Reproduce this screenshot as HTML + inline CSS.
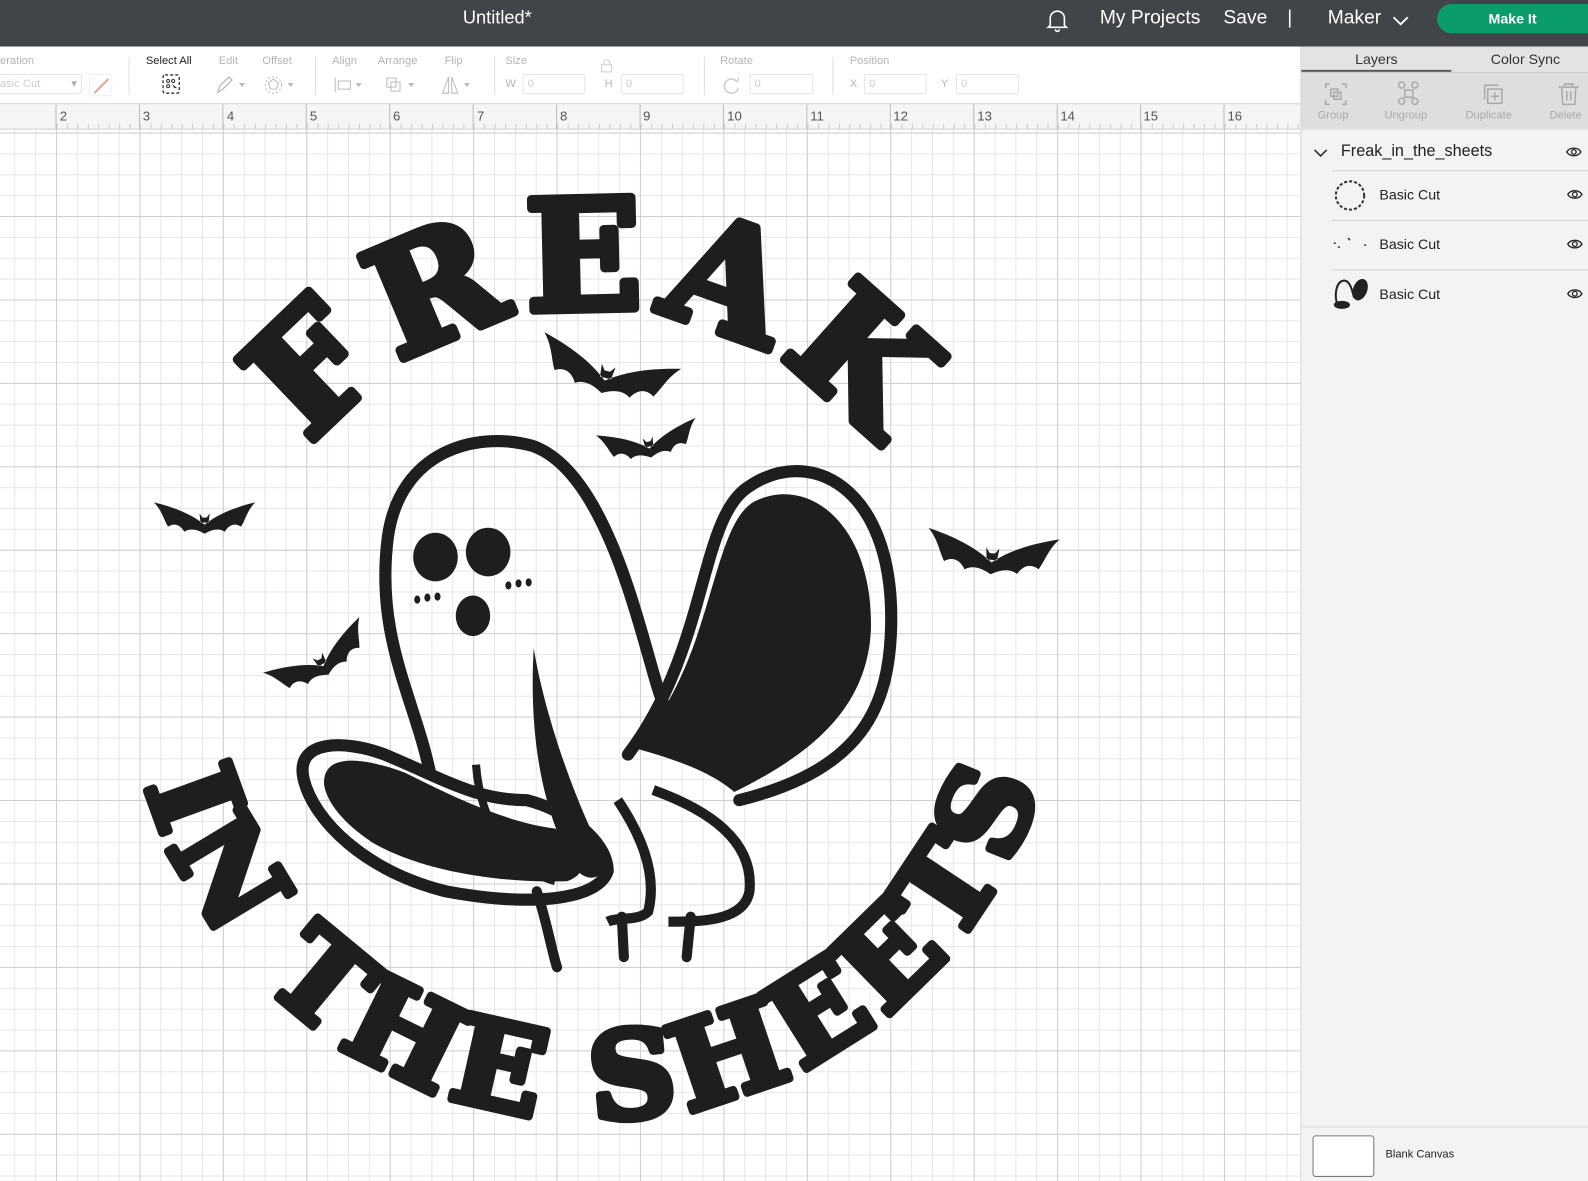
<!DOCTYPE html>
<html><head><meta charset="utf-8">
<style>
*{margin:0;padding:0;box-sizing:border-box}
body{width:1588px;height:1181px;overflow:hidden;font-family:"Liberation Sans",sans-serif;background:#fff;position:relative}
#w{position:absolute;left:0;top:0;width:1568px;height:1166px;transform:scale(1.01276,1.01286);transform-origin:0 0;overflow:hidden}
.top{position:absolute;left:0;top:0;width:1568px;height:46px;background:#414449;color:#fff}
.top span{position:absolute;top:7px;font-size:19px}
.make{position:absolute;left:1419px;top:4px;width:149px;height:29px;border-radius:15px 0 0 15px;background:#0b9c6c;color:#fff;font-size:14px;text-align:center;line-height:29px;font-weight:bold}
.tb{position:absolute;left:0;top:46px;width:1284px;height:57px;background:#fff;border-bottom:1px solid #ccc}
.tb .l{position:absolute;top:8px;font-size:11px;color:#b5b5b5}
.tb .sep{position:absolute;top:10px;width:1px;height:38px;background:#ddd}
.inp{position:absolute;top:27px;height:20px;border:1px solid #e5e5e5;border-radius:2px;font-size:11px;color:#ccc;padding-left:4px;line-height:18px}
.ruler{position:absolute;left:0;top:103px;width:1284px;height:25px;background:#f5f5f5;border-bottom:1px solid #ccc}
.canvas{position:absolute;left:0;top:128px;width:1284px;height:1038px;
background-color:#fff;
background-image:linear-gradient(#cfcfcf 1px,transparent 1px),linear-gradient(90deg,#cfcfcf 1px,transparent 1px),linear-gradient(#e6e6e6 1px,transparent 1px),linear-gradient(90deg,#e6e6e6 1px,transparent 1px);
background-size:82.38px 82.38px,82.38px 82.38px,20.595px 20.595px,20.595px 20.595px;
background-position:0 2.9px,55.3px 0,0 2.9px,55.3px 0}
.panel{position:absolute;left:1284px;top:46px;width:284px;height:1120px;background:#f3f3f3;border-left:1px solid #d5d5d5}
.tabs{height:25px;background:#e3e3e3;position:relative}
.tabs span{position:absolute;top:4px;font-size:14px;color:#333}
.acts{height:57px;background:#dedede;position:relative;border-top:1px solid #ccc}
.acts span{position:absolute;top:36px;font-size:11px;color:#aaa}
.row{position:absolute;left:30px;width:254px;height:49px;border-top:1px solid #d0d0d0}
.row .t{position:absolute;left:47px;top:15px;font-size:14px;color:#222}
.eye{position:absolute;right:6px}
</style></head><body><div id="w">
<div class="top">
<span style="left:457px;font-size:18px">Untitled*</span>
<svg style="position:absolute;left:1033px;top:8px" width="22" height="24" viewBox="0 0 22 24"><path d="M4 17 V10 a7 7 0 0 1 14 0 V17 l2 2 H2 z M9 21 a2 2 0 0 0 4 0" fill="none" stroke="#fff" stroke-width="1.6"/></svg>
<span style="left:1086px">My Projects</span>
<span style="left:1208px">Save</span>
<span style="left:1271px">|</span>
<span style="left:1311px">Maker</span>
<svg style="position:absolute;left:1374px;top:14px" width="18" height="12"><path d="M2 3 L9 10 L16 3" fill="none" stroke="#fff" stroke-width="1.8"/></svg>
<div class="make">Make It</div>
</div>
<div class="tb">
<span class="l" style="left:0">eration</span>
<div class="inp" style="left:-5px;width:86px">asic Cut <span style="float:right;margin-right:4px;color:#aaa">▾</span></div>
<div style="position:absolute;left:88px;top:27px;width:22px;height:22px;border:1px solid #eee"><svg width="22" height="22"><path d="M4 18 L18 4" stroke="#f0a090" stroke-width="2"/></svg></div>
<div class="sep" style="left:127px"></div>
<span class="l" style="left:144px;color:#222">Select All</span>
<svg style="position:absolute;left:159px;top:26px" width="20" height="22"><rect x="2" y="2" width="16" height="18" rx="2" fill="none" stroke="#333" stroke-dasharray="3 2" stroke-width="1.3"/><circle cx="7" cy="8" r="1.5" fill="none" stroke="#333"/><circle cx="12" cy="8" r="1.5" fill="none" stroke="#333"/><circle cx="7" cy="13" r="1.5" fill="none" stroke="#333"/><path d="M11 11 l5 4 -3 0 z" fill="#333"/></svg>
<span class="l" style="left:216px">Edit</span>
<svg style="position:absolute;left:213px;top:28px" width="32" height="20"><path d="M2 17 L4 11 L13 2 L16 5 L7 14 Z" fill="none" stroke="#bbb" stroke-width="1.3"/><path d="M23 8 l3 4 3 -4z" fill="#bbb"/></svg>
<span class="l" style="left:259px">Offset</span>
<svg style="position:absolute;left:260px;top:28px" width="32" height="20"><circle cx="10" cy="10" r="8" fill="none" stroke="#bbb" stroke-dasharray="2 2"/><path d="M10 4 L15 8 L13 14 L7 14 L5 8Z" fill="none" stroke="#bbb"/><path d="M24 8 l3 4 3 -4z" fill="#bbb"/></svg>
<div class="sep" style="left:311px"></div>
<span class="l" style="left:328px">Align</span>
<svg style="position:absolute;left:329px;top:30px" width="32" height="16"><path d="M2 1 V15" stroke="#bbb"/><rect x="5" y="4" width="12" height="8" fill="none" stroke="#bbb"/><path d="M22 6 l3 4 3 -4z" fill="#bbb"/></svg>
<span class="l" style="left:373px">Arrange</span>
<svg style="position:absolute;left:381px;top:29px" width="32" height="18"><rect x="1" y="2" width="9" height="9" fill="none" stroke="#bbb"/><rect x="5" y="6" width="9" height="9" fill="none" stroke="#bbb"/><path d="M22 7 l3 4 3 -4z" fill="#bbb"/></svg>
<span class="l" style="left:439px">Flip</span>
<svg style="position:absolute;left:435px;top:28px" width="32" height="20"><path d="M8 2 L2 18 H8Z M11 2 V18 H17Z" fill="none" stroke="#bbb"/><path d="M23 8 l3 4 3 -4z" fill="#bbb"/></svg>
<div class="sep" style="left:488px"></div>
<span class="l" style="left:499px">Size</span>
<span class="l" style="left:499px;top:31px">W</span><div class="inp" style="left:516px;width:62px">0</div>
<span class="l" style="left:597px;top:31px">H</span><div class="inp" style="left:613px;width:62px">0</div>
<svg style="position:absolute;left:593px;top:12px" width="12" height="14"><rect x="1" y="6" width="10" height="7" fill="none" stroke="#ccc"/><path d="M3 6 V4 a3 3 0 0 1 6 0 V6" fill="none" stroke="#ccc"/></svg>
<div class="sep" style="left:695px"></div>
<span class="l" style="left:711px">Rotate</span>
<svg style="position:absolute;left:712px;top:29px" width="20" height="20"><path d="M16 6 A7 7 0 1 0 17 12" fill="none" stroke="#ccc" stroke-width="1.5"/><path d="M13 5 h4 v-4" fill="none" stroke="#ccc"/></svg>
<div class="inp" style="left:740px;width:63px">0</div>
<div class="sep" style="left:822px"></div>
<span class="l" style="left:839px">Position</span>
<span class="l" style="left:839px;top:31px">X</span><div class="inp" style="left:853px;width:62px">0</div>
<span class="l" style="left:929px;top:31px">Y</span><div class="inp" style="left:944px;width:62px">0</div>
</div>
<div class="ruler">
<svg width="1284" height="25" style="position:absolute;left:0;top:0">
<g font-size="13" fill="#555" font-family="Liberation Sans">
<text x="59" y="16">2</text><text x="141" y="16">3</text><text x="224" y="16">4</text><text x="306" y="16">5</text><text x="388" y="16">6</text><text x="471" y="16">7</text><text x="553" y="16">8</text><text x="635" y="16">9</text><text x="718" y="16">10</text><text x="800" y="16">11</text><text x="882" y="16">12</text><text x="965" y="16">13</text><text x="1047" y="16">14</text><text x="1129" y="16">15</text><text x="1212" y="16">16</text>
</g>
<path stroke="#bbb" d="M55.3 0V25M137.7 0V25M220.1 0V25M302.4 0V25M384.8 0V25M467.2 0V25M549.6 0V25M632 0V25M714.3 0V25M796.7 0V25M879.1 0V25M961.5 0V25M1043.9 0V25M1126.2 0V25M1208.6 0V25"/>
<path stroke="#ccc" stroke-width="6" stroke-dasharray="1 9.3" d="M55.8 22H1284"/>
</svg>
</div>
<div class="canvas">
<svg width="1284" height="1038" viewBox="0 128 1284 1038" style="position:absolute;left:0;top:0">
<defs>
<path id="arcTop" d="M235,655 A350,350 0 0 1 935,655"/>
<path id="arcBot" d="M125,645 A460,460 0 0 0 1045,645"/>
<symbol id="bat" viewBox="-52 -20 104 40" overflow="visible"><path d="M0,8 C-10,0 -25,-8 -50,-14 C-42,-6 -40,4 -36,10 C-30,6 -24,8 -20,15 C-14,11 -7,13 0,17 C7,13 14,11 20,15 C24,8 30,6 36,10 C40,4 42,-6 50,-14 C25,-8 10,0 0,8Z M-4,6 L-5,-3 L-2,1 L2,1 L5,-3 L4,6Z" fill="#1e1e1e"/></symbol>
</defs>
<g font-family="'DejaVu Serif','Liberation Serif',serif" font-weight="bold" fill="#1e1e1e" stroke="#1e1e1e" stroke-linejoin="round">
<text font-size="150" stroke-width="9" textLength="640" lengthAdjust="spacing"><textPath href="#arcTop" startOffset="50%" text-anchor="middle">FREAK</textPath></text>
<text font-size="118" stroke-width="8" textLength="1180" lengthAdjust="spacing"><textPath href="#arcBot" startOffset="50%" text-anchor="middle">IN THE SHEETS</textPath></text>
</g>
<use href="#bat" x="150" y="490" width="104" height="40"/>
<use href="#bat" transform="translate(600,365) rotate(15) scale(1.4)" x="-52" y="-20" width="104" height="40"/>
<use href="#bat" transform="translate(640,435) rotate(-10) scale(1.0)" x="-52" y="-20" width="104" height="40"/>
<use href="#bat" transform="translate(980,545) rotate(5) scale(1.3)" x="-52" y="-20" width="104" height="40"/>
<use href="#bat" transform="translate(315,650) rotate(-30) scale(1.1)" x="-52" y="-20" width="104" height="40"/>
<path d="M620,745 C700,640 690,510 740,480 C800,440 880,480 880,610 C880,700 850,760 730,790" fill="none" stroke="#1e1e1e" stroke-width="12" stroke-linecap="round"/>
<path d="M625,738 C705,660 700,520 745,495 C800,468 862,520 860,620 C857,700 800,745 725,782 C700,760 660,748 625,738Z" fill="#1e1e1e"/>
<path d="M300,770 C290,730 340,730 380,745 C440,770 470,790 520,790 C560,800 600,830 600,860 C590,890 520,895 440,880 C360,860 310,810 300,770Z" fill="none" stroke="#1e1e1e" stroke-width="12"/>
<path d="M320,775 C318,742 360,748 400,763 C450,788 500,812 548,818 C580,838 584,862 560,870 C500,872 420,862 368,832 C338,812 323,792 320,775Z" fill="#1e1e1e"/>
<path d="M425,765 C410,690 370,630 383,530 C395,445 470,425 525,440 C570,455 600,520 620,580 C640,640 650,690 658,700" fill="none" stroke="#1e1e1e" stroke-width="12"/>
<path d="M527,640 C540,720 580,820 600,850 C595,870 580,870 570,860 C550,830 520,760 527,640Z" fill="#1e1e1e"/>
<path d="M470,755 C475,820 510,860 548,870" fill="none" stroke="#1e1e1e" stroke-width="8"/>
<path d="M645,780 C700,800 745,830 740,880 C735,910 690,910 660,910" fill="none" stroke="#1e1e1e" stroke-width="10"/>
<path d="M610,790 C630,820 650,860 640,900 C630,910 610,905 600,910" fill="none" stroke="#1e1e1e" stroke-width="10"/>
<path d="M530,880 C540,910 545,940 550,955" stroke="#1e1e1e" stroke-width="10" stroke-linecap="round"/>
<path d="M614,905 L616,945" stroke="#1e1e1e" stroke-width="10" stroke-linecap="round"/>
<path d="M682,905 L678,945" stroke="#1e1e1e" stroke-width="10" stroke-linecap="round"/>
<ellipse cx="430" cy="550" rx="22" ry="24" fill="#1e1e1e"/>
<ellipse cx="482" cy="545" rx="22" ry="24" fill="#1e1e1e"/>
<ellipse cx="467" cy="608" rx="17" ry="20" fill="#1e1e1e"/>
<g fill="#1e1e1e"><ellipse cx="412" cy="592" rx="3" ry="4"/><ellipse cx="422" cy="590" rx="3" ry="4"/><ellipse cx="432" cy="589" rx="3" ry="4"/><ellipse cx="502" cy="578" rx="3" ry="4"/><ellipse cx="512" cy="576" rx="3" ry="4"/><ellipse cx="522" cy="575" rx="3" ry="4"/></g>
</svg>
</div>
<div class="panel">
<div class="tabs"><span style="left:53px">Layers</span><span style="left:187px">Color Sync</span><div style="position:absolute;left:0;bottom:0;width:148px;height:2px;background:#555"></div></div>
<div class="acts">
<svg style="position:absolute;left:22px;top:9px" width="24" height="24"><path d="M2 6V2h4M18 2h4v4M22 18v4h-4M6 22H2v-4" fill="none" stroke="#aaa" stroke-width="1.5"/><rect x="7" y="7" width="7" height="7" fill="none" stroke="#aaa" stroke-width="1.5"/><rect x="10" y="10" width="7" height="7" fill="none" stroke="#aaa" stroke-width="1.5"/></svg>
<span style="left:16px">Group</span>
<svg style="position:absolute;left:94px;top:8px" width="24" height="26"><g fill="none" stroke="#aaa" stroke-width="1.5"><circle cx="5" cy="4" r="3"/><circle cx="18" cy="4" r="3"/><circle cx="5" cy="20" r="3"/><circle cx="18" cy="20" r="3"/><rect x="8" y="9" width="8" height="7"/></g></svg>
<span style="left:82px">Ungroup</span>
<svg style="position:absolute;left:177px;top:9px" width="24" height="24"><g fill="none" stroke="#aaa" stroke-width="1.5"><path d="M4 17V3h14"/><rect x="7" y="7" width="14" height="14"/><path d="M14 10v8M10 14h8"/></g></svg>
<span style="left:162px">Duplicate</span>
<svg style="position:absolute;left:252px;top:9px" width="24" height="24"><g fill="none" stroke="#aaa" stroke-width="1.5"><path d="M2 5h20M8 5V2h8v3M5 5l1 17h12l1-17M10 9v9M14 9v9"/></g></svg>
<span style="left:245px">Delete</span>
</div>
<svg style="position:absolute;left:12px;top:100px" width="14" height="10"><path d="M1 2 L7 8 L13 2" fill="none" stroke="#333" stroke-width="1.6"/></svg>
<span style="position:absolute;left:39px;top:95px;font-size:16px;color:#222">Freak_in_the_sheets</span>
<svg class="eye" style="top:98px" width="16" height="12"><path d="M1 6 C4 1 12 1 15 6 C12 11 4 11 1 6Z" fill="none" stroke="#222" stroke-width="1.3"/><circle cx="8" cy="6" r="2.3" fill="none" stroke="#222" stroke-width="1.3"/></svg>
<div class="row" style="top:122px"><svg style="position:absolute;left:0;top:4px" width="36" height="40"><circle cx="18" cy="20" r="14" fill="none" stroke="#333" stroke-width="2" stroke-dasharray="3 2"/></svg><span class="t">Basic Cut</span><svg class="eye" style="top:17px" width="16" height="12"><path d="M1 6 C4 1 12 1 15 6 C12 11 4 11 1 6Z" fill="none" stroke="#222" stroke-width="1.3"/><circle cx="8" cy="6" r="2.3" fill="none" stroke="#222" stroke-width="1.3"/></svg></div>
<div class="row" style="top:171px"><svg style="position:absolute;left:0;top:10px" width="36" height="30"><path d="M2 12h2M6 16h2M16 7l2 2M32 14h2" stroke="#333" stroke-width="1.5"/></svg><span class="t">Basic Cut</span><svg class="eye" style="top:17px" width="16" height="12"><path d="M1 6 C4 1 12 1 15 6 C12 11 4 11 1 6Z" fill="none" stroke="#222" stroke-width="1.3"/><circle cx="8" cy="6" r="2.3" fill="none" stroke="#222" stroke-width="1.3"/></svg></div>
<div class="row" style="top:220px"><svg style="position:absolute;left:0;top:5px" width="38" height="36"><path d="M6 30 C2 20 4 6 12 5 C18 5 20 14 22 22" fill="none" stroke="#222" stroke-width="2"/><ellipse cx="28" cy="14" rx="7" ry="11" fill="#222" transform="rotate(20 28 14)"/><ellipse cx="10" cy="29" rx="8" ry="4" fill="#222"/></svg><span class="t">Basic Cut</span><svg class="eye" style="top:17px" width="16" height="12"><path d="M1 6 C4 1 12 1 15 6 C12 11 4 11 1 6Z" fill="none" stroke="#222" stroke-width="1.3"/><circle cx="8" cy="6" r="2.3" fill="none" stroke="#222" stroke-width="1.3"/></svg></div>
<div style="position:absolute;left:0;top:1066px;width:284px;height:54px;border-top:1px solid #ddd;background:#f3f3f3">
<div style="position:absolute;left:11px;top:8px;width:61px;height:41px;background:#fff;border:1px solid #777;border-radius:3px"></div>
<span style="position:absolute;left:83px;top:21px;font-size:11px;color:#222">Blank Canvas</span>
</div>
</div>
</div></body></html>
